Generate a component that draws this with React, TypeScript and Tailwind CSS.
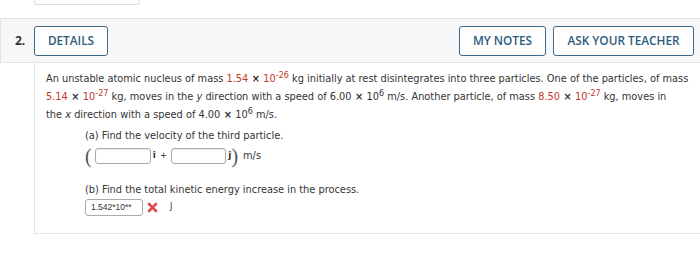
import React from 'react';

const Red = ({ children }: { children: React.ReactNode }) => (
  <span className="text-[#c0392b]">{children}</span>
);

const Times = () => <span className="font-bold text-[#333]"> × </span>;

function Sci({ m, e }: { m: string; e: string }) {
  return (
    <>
      <Red>{m}</Red>
      <Times />
      <Red>
        10<sup className="text-[8px]">{e}</sup>
      </Red>
    </>
  );
}

function HeaderButton({ label, className }: { label: string; className?: string }) {
  return (
    <button
      className={`h-[30px] rounded-[3px] border border-[#3b6a8b] bg-white text-[11.8px] font-semibold text-[#2d5b7c] ${className ?? ''}`}
    >
      {label}
    </button>
  );
}

export default function App() {
  return (
    <div className="h-[255px] w-[700px] overflow-hidden bg-white" style={{ fontFamily: '"DejaVu Sans", Verdana, sans-serif' }}>
      {/* tail of previous block */}
      <div className="ml-[34px] h-[5px] w-[106px] rounded-b-[3px] border border-t-0 border-[#dcdcdc]" />

      {/* Header */}
      <div
        className="mt-[13px] flex h-[45px] items-center border-y border-l border-[#e4e4e4] bg-[#f7f7f7] pl-[14px] pr-[6px]"
        style={{ fontFamily: '"Open Sans", sans-serif' }}
      >
        <span className="w-[19px] text-[12px] font-bold text-[#333]">2.</span>
        <HeaderButton label="DETAILS" className="w-[74px] bg-[#fbfdff]" />
        <div className="flex-1" />
        <HeaderButton label="MY NOTES" className="w-[87px]" />
        <HeaderButton label="ASK YOUR TEACHER" className="ml-[7px] w-[141px]" />
      </div>

      {/* Body */}
      <div className="ml-[34px] h-[171px] border-b border-l border-[#e4e4e4] pl-[11px] pr-[4px] pt-[7px] text-[9.8px] text-[#333]">
        <p className="whitespace-nowrap leading-[18px]">
          An unstable atomic nucleus of mass <Sci m="1.54" e="-26" /> kg initially at rest disintegrates into three
          particles. One of the particles, of mass
          <br />
          <Sci m="5.14" e="-27" /> kg, moves in the <i>y</i> direction with a speed of 6.00<Times />10
          <sup className="text-[8px]">6</sup> m/s. Another particle, of mass <Sci m="8.50" e="-27" /> kg, moves in
          <br />
          the <i>x</i> direction with a speed of 4.00<Times />10<sup className="text-[8px]">6</sup> m/s.
        </p>

        <div className="ml-[39px] mt-[5px]">
          <p className="leading-[14px]">(a) Find the velocity of the third particle.</p>
          <div className="mt-[2px] flex h-[22px] items-center">
            <span className="text-[20px] font-light leading-none text-[#555]" style={{ fontFamily: '"Liberation Serif", serif' }}>
              (
            </span>
            <span className="ml-[3px] h-[16px] w-[56px] rounded-[3px] border border-[#aaa] shadow-[inset_0_1px_1px_rgba(0,0,0,0.08)]" />
            <span className="ml-[2px] text-[9px] font-bold">î</span>
            <span className="ml-[4px] text-[9px]">+</span>
            <span className="ml-[4px] h-[16px] w-[55px] rounded-[3px] border border-[#aaa] shadow-[inset_0_1px_1px_rgba(0,0,0,0.08)]" />
            <span className="ml-[2px] text-[9px] font-bold">ĵ</span>
            <span className="text-[20px] font-light leading-none text-[#555]" style={{ fontFamily: '"Liberation Serif", serif' }}>
              )
            </span>
            <span className="ml-[5px]">m/s</span>
          </div>

          <p className="mt-[16px] leading-[14px]">(b) Find the total kinetic energy increase in the process.</p>
          <div className="mt-[1px] flex h-[18px] items-center">
            <span
              className="flex h-[17px] w-[58px] items-center rounded-[3px] border border-[#aaa] pl-[5px] text-[8.5px] text-[#333]"
              style={{ fontFamily: '"Liberation Sans", Arial, sans-serif' }}
            >
              1.542*10**
            </span>
            <svg className="ml-[4px]" width="11" height="11" viewBox="0 0 11 11">
              <path d="M2 2 L9 9 M9 2 L2 9" stroke="#e5474f" strokeWidth="2.6" strokeLinecap="round" />
            </svg>
            <span className="ml-[12px] text-[8px]">J</span>
          </div>
        </div>
      </div>
    </div>
  );
}
